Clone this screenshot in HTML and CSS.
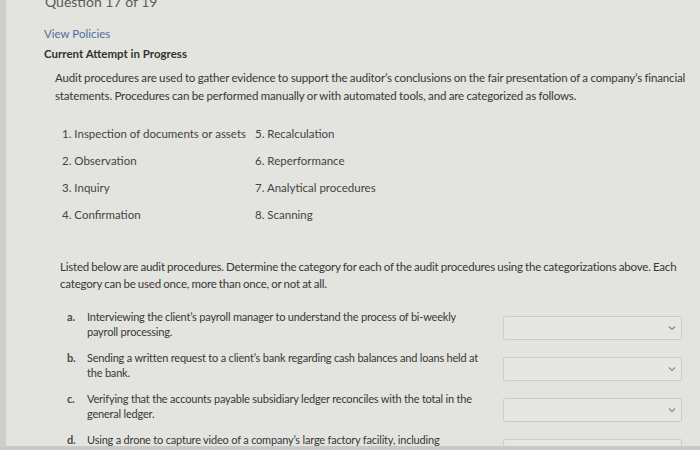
FILE: index.html
```html
<!DOCTYPE html>
<html lang="en">
<head>
<meta charset="utf-8">
<title>Question 17 of 19</title>
<link rel="stylesheet" href="styles.css">
</head>
<body>
<div class="edge"></div>
<main class="page">
  <h1 class="qtitle">Question 17 of 19</h1>
  <a class="policies" href="#">View Policies</a>
  <div class="attempt">Current Attempt in Progress</div>

  <p class="intro">Audit procedures are used to gather evidence to support the auditor’s conclusions on the fair presentation of a company’s financial statements. Procedures can be performed manually or with automated tools, and are categorized as follows.</p>

  <div class="cats">
    <div class="cat">1. Inspection of documents or assets</div>
    <div class="cat">5. Recalculation</div>
    <div class="cat">2. Observation</div>
    <div class="cat">6. Reperformance</div>
    <div class="cat">3. Inquiry</div>
    <div class="cat">7. Analytical procedures</div>
    <div class="cat">4. Confirmation</div>
    <div class="cat">8. Scanning</div>
  </div>

  <p class="listed">Listed below are audit procedures. Determine the category for each of the audit procedures using the categorizations above. Each category can be used once, more than once, or not at all.</p>

  <ol class="items">
    <li class="item">
      <span class="letter">a.</span>
      <span class="text">Interviewing the client’s payroll manager to understand the process of bi-weekly payroll processing.</span>
      <span class="select"><svg viewBox="0 0 8 6" class="chev"><path d="M1 1.5 L4 4.5 L7 1.5" fill="none" stroke="#8a8a88" stroke-width="1.2"/></svg></span>
    </li>
    <li class="item">
      <span class="letter">b.</span>
      <span class="text">Sending a written request to a client’s bank regarding cash balances and loans held at the bank.</span>
      <span class="select"><svg viewBox="0 0 8 6" class="chev"><path d="M1 1.5 L4 4.5 L7 1.5" fill="none" stroke="#8a8a88" stroke-width="1.2"/></svg></span>
    </li>
    <li class="item">
      <span class="letter">c.</span>
      <span class="text">Verifying that the accounts payable subsidiary ledger reconciles with the total in the general ledger.</span>
      <span class="select"><svg viewBox="0 0 8 6" class="chev"><path d="M1 1.5 L4 4.5 L7 1.5" fill="none" stroke="#8a8a88" stroke-width="1.2"/></svg></span>
    </li>
    <li class="item">
      <span class="letter">d.</span>
      <span class="text">Using a drone to capture video of a company’s large factory facility, including machinery and equipment used in operations.</span>
      <span class="select"><svg viewBox="0 0 8 6" class="chev"><path d="M1 1.5 L4 4.5 L7 1.5" fill="none" stroke="#8a8a88" stroke-width="1.2"/></svg></span>
    </li>
  </ol>
</main>
<div class="bottombar"></div>
</body>
</html>
```

FILE: styles.css
```css
html, body {
  margin: 0;
  padding: 0;
  background: #e3e3df;
  height: 100%;
  overflow: hidden;
}
body {
  font-family: Lato, "Liberation Sans", sans-serif;
  color: #383836;
  font-size: 11.5px;
  position: relative;
}
.edge {
  position: absolute;
  left: 0;
  top: 0;
  bottom: 0;
  width: 6px;
  background: #cfcfca;
}
.page {
  padding-left: 44px;
  padding-right: 14px;
}
.qtitle {
  margin: -6px 0 0 1px;
  font-size: 14px;
  font-weight: 400;
  color: #5a5a58;
  line-height: 16px;
}
.policies {
  display: block;
  margin-top: 16px;
  color: #4f6f9f;
  text-decoration: none;
  line-height: 16px;
}
.attempt {
  margin-top: 4px;
  font-weight: 700;
  color: #333331;
  line-height: 16px;
}
.intro {
  margin: 7px 0 0 11px;
  line-height: 18px;
  letter-spacing: -0.15px;
  word-spacing: -0.3px;
}
.cats {
  margin: 20px 0 0 18px;
  display: grid;
  grid-template-columns: 193px 1fr;
  row-gap: 10px;
  line-height: 17px;
  color: #444442;
}
.cat {
  white-space: nowrap;
}
.listed {
  margin: 35px 0 0 16px;
  line-height: 17px;
  letter-spacing: -0.2px;
  word-spacing: -0.5px;
}
.items {
  list-style: none;
  margin: 17px 0 0 0;
  padding: 0 0 0 23px;
}
.item {
  display: flex;
  align-items: flex-start;
  margin-bottom: 10px;
  line-height: 15px;
  font-size: 11px;
  letter-spacing: -0.2px;
}
.letter {
  width: 20px;
  flex: none;
  font-weight: 700;
  color: #4a4a48;
}
.text {
  width: 395px;
  flex: none;
}
.select {
  margin-left: 21px;
  margin-top: 7px;
  width: 179px;
  height: 24px;
  flex: none;
  border: 1px solid #cdcdc8;
  border-radius: 2px;
  background: #e6e6e2;
  display: flex;
  align-items: center;
  justify-content: flex-end;
  padding-right: 5px;
  box-sizing: border-box;
}
.chev {
  width: 8px;
  height: 6px;
}
.bottombar {
  position: absolute;
  left: 0;
  right: 0;
  bottom: 0;
  height: 4px;
  background: #c9cac6;
}
```
